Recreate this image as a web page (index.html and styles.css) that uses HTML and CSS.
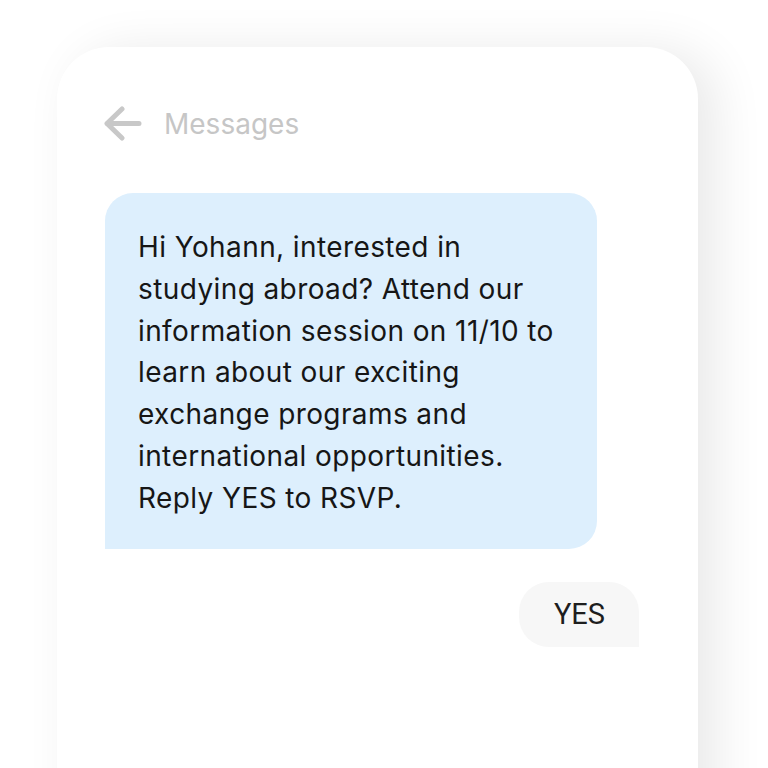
FILE: index.html
```html
<!DOCTYPE html>
<html lang="en">
<head>
<meta charset="utf-8">
<title>Messages</title>
<link rel="stylesheet" href="styles.css">
</head>
<body>
<div class="stage">
  <div class="phone">
    <header class="bar">
      <svg class="back" width="38" height="36" viewBox="0 0 38 36" aria-hidden="true">
        <path d="M35 17.5 H3 M18 3 L3 17.5 L18 32" fill="none" stroke="#c8c8c8" stroke-width="5" stroke-linecap="round" stroke-linejoin="round"/>
      </svg>
      <span class="title">Messages</span>
    </header>
    <div class="thread">
      <div class="bubble in">Hi Yohann, interested in<br>studying abroad? Attend our<br>information session on 11/10 to<br>learn about our exciting<br>exchange programs and<br>international opportunities.<br>Reply YES to RSVP.</div>
      <div class="bubble out">YES</div>
    </div>
  </div>
</div>
</body>
</html>
```
FILE: styles.css
```css
html, body {
  margin: 0;
  padding: 0;
  background: #ffffff;
  overflow: hidden;
}
.stage {
  width: 768px;
  height: 768px;
  overflow: hidden;
  padding: 47px 0 0 57px;
  box-sizing: border-box;
}
.phone {
  width: 641px;
  height: 800px;
  box-sizing: border-box;
  background: #ffffff;
  border-radius: 52px 52px 0 0;
  box-shadow: 18px 4px 50px rgba(0, 0, 0, 0.09);
  padding: 59px 59px 0 47px;
  font-family: "Inter", "Noto Sans", sans-serif;
}
.bar {
  display: flex;
  align-items: center;
  height: 36px;
  gap: 22px;
}
.back {
  display: block;
  flex: none;
}
.title {
  font-size: 28px;
  color: #c6c6c6;
}
.thread {
  display: flex;
  flex-direction: column;
  margin-top: 51px;
}
.bubble.in {
  align-self: flex-start;
  width: 492px;
  box-sizing: border-box;
  margin-left: 1px;
  background: #ddeffd;
  border-radius: 28px 28px 28px 0;
  padding: 34px 10px 29px 33px;
  font-size: 28px;
  line-height: 41.8px;
  color: #161616;
  letter-spacing: 0.4px;
}
.bubble.out {
  align-self: flex-end;
  margin-top: 33px;
  height: 65px;
  box-sizing: border-box;
  padding: 0 34px 0 35px;
  display: flex;
  align-items: center;
  background: #f7f7f7;
  border-radius: 30px 30px 0 30px;
  font-family: "Roboto", "Liberation Sans", sans-serif;
  font-size: 29px;
  color: #1e1e1e;
}
```
